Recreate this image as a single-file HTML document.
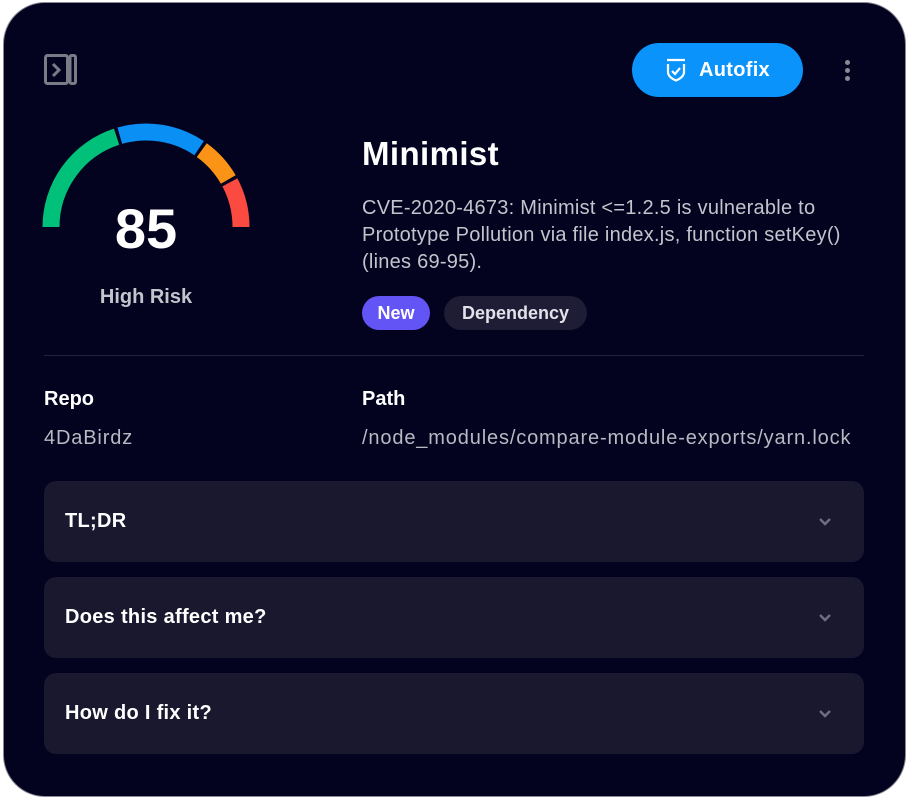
<!DOCTYPE html>
<html><head><meta charset="utf-8"><style>
*{margin:0;padding:0;box-sizing:border-box}
body{width:908px;height:800px;background:#fff;font-family:"Liberation Sans",sans-serif;position:relative;overflow:hidden}
.card{position:absolute;left:3px;top:2px;width:903px;height:795px;background:#03021f;border-radius:42px;border:1px solid #8a8a96}
.abs{position:absolute}
.btn{left:632px;top:43px;width:171px;height:54px;border-radius:27px;background:#0a93fb;color:#fff;font-weight:bold;font-size:20px;display:flex;align-items:center;justify-content:center;gap:12px;letter-spacing:0.3px}
.dot{width:5px;height:5px;border-radius:50%;background:#8b8b98;left:845px}
.title{left:362px;top:135px;color:#fff;font-size:33px;font-weight:bold;letter-spacing:0.4px}
.desc{left:362px;top:195px;width:510px;color:#c4c4cc;font-size:20px;line-height:27px;letter-spacing:0.25px}
.tag{top:296px;height:34px;border-radius:17px;font-size:18px;font-weight:bold;display:flex;align-items:center;justify-content:center}
.lbl{color:#fff;font-size:20px;font-weight:bold;top:388px}
.val{color:#b9b9c2;font-size:20px;top:427px;letter-spacing:0.85px}
.acc{left:44px;width:820px;height:81px;border-radius:12px;background:#19182f;color:#fff;font-size:20px;font-weight:bold;padding-left:21px;display:flex;align-items:center;letter-spacing:0.3px}
.chev{position:absolute;right:32px;top:36px}
</style></head><body>
<div class="card"></div>
<svg class="abs" style="left:44px;top:54px" width="34" height="32" viewBox="0 0 34 32"><rect x="1.5" y="1.5" width="22" height="28" rx="2" fill="none" stroke="#7b7b88" stroke-width="3"/><path d="M9 10l6 6-6 6" fill="none" stroke="#7b7b88" stroke-width="3"/><rect x="26" y="1.5" width="5.5" height="28" rx="1.5" fill="none" stroke="#7b7b88" stroke-width="3"/></svg>
<div class="abs btn"><svg width="22" height="24" viewBox="0 0 22 24"><path d="M2 2h18" stroke="#fff" stroke-width="2.2"/><path d="M3 6v8c0 4 4 7 8 8.5c4-1.5 8-4.5 8-8.5V6" fill="none" stroke="#fff" stroke-width="2.2"/><path d="M7 13l3 3 5-6" fill="none" stroke="#fff" stroke-width="2.2"/></svg>Autofix</div>
<div class="abs dot" style="top:60px"></div><div class="abs dot" style="top:68px"></div><div class="abs dot" style="top:76px"></div>
<svg class="abs" style="left:0;top:0" width="300" height="260">
<g fill="none" stroke-width="17">
<path d="M51 227A95 95 0 0 1 116.6 136.7" stroke="#00c07a"/>
<path d="M119.8 135.7A95 95 0 0 1 199.1 148.2" stroke="#0a8ff5"/>
<path d="M201.8 150.1A95 95 0 0 1 228.3 179.5" stroke="#fb9316"/>
<path d="M229.9 182.4A95 95 0 0 1 241 227" stroke="#fb4b40"/>
</g></svg>
<div class="abs" style="left:46px;width:200px;top:196px;text-align:center;color:#fff;font-size:56px;font-weight:bold">85</div>
<div class="abs" style="left:46px;width:200px;top:286px;text-align:center;color:#c4c4cc;font-size:20px;font-weight:bold">High Risk</div>
<div class="abs title">Minimist</div>
<div class="abs desc">CVE-2020-4673: Minimist &lt;=1.2.5 is vulnerable to Prototype Pollution via file index.js, function setKey() (lines 69-95).</div>
<div class="abs tag" style="left:362px;width:68px;background:#6355f5;color:#fff">New</div>
<div class="abs tag" style="left:444px;width:143px;background:#1e1d35;color:#e2e2ea">Dependency</div>
<div class="abs" style="left:44px;top:355px;width:820px;height:1px;background:#22213a"></div>
<div class="abs lbl" style="left:44px">Repo</div>
<div class="abs lbl" style="left:362px">Path</div>
<div class="abs val" style="left:44px">4DaBirdz</div>
<div class="abs val" style="left:362px">/node_modules/compare-module-exports/yarn.lock</div>
<div class="abs acc" style="top:481px">TL;DR<svg class="chev" width="14" height="9"><path d="M2 2l5 5 5-5" fill="none" stroke="#6e6e80" stroke-width="2.4"/></svg></div>
<div class="abs acc" style="top:577px">Does this affect me?<svg class="chev" width="14" height="9"><path d="M2 2l5 5 5-5" fill="none" stroke="#6e6e80" stroke-width="2.4"/></svg></div>
<div class="abs acc" style="top:673px">How do I fix it?<svg class="chev" width="14" height="9"><path d="M2 2l5 5 5-5" fill="none" stroke="#6e6e80" stroke-width="2.4"/></svg></div>
</body></html>
